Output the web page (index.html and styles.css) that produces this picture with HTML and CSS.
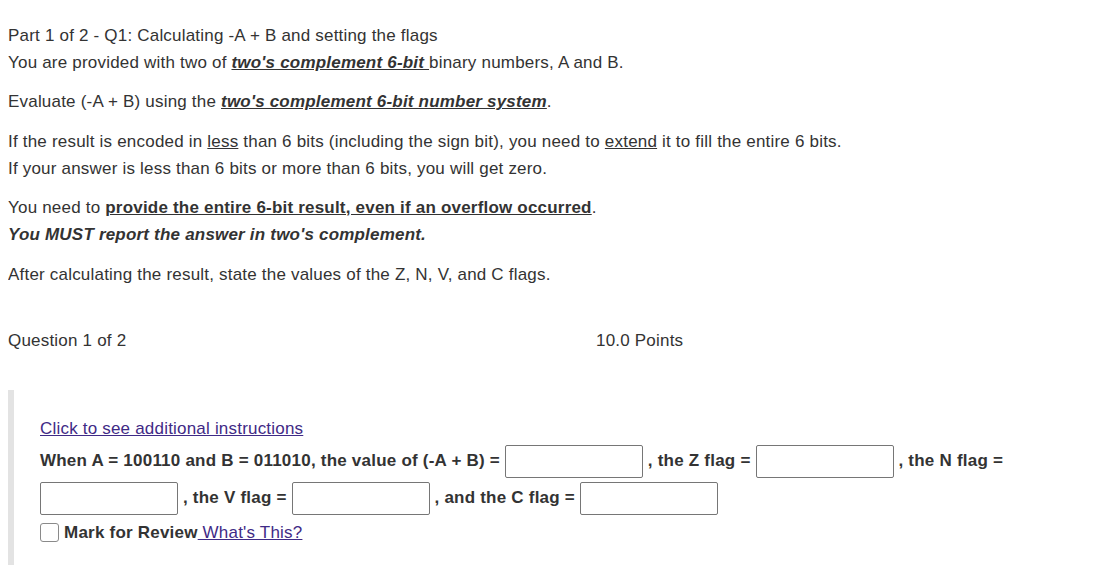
FILE: index.html
```html
<!DOCTYPE html>
<html lang="en">
<head>
    <meta charset="UTF-8">
    <meta name="viewport" content="width=device-width, initial-scale=1.0">
    <title>Part 1 of 2 - Q1</title>
    <link rel="stylesheet" href="styles.css">
</head>
<body>
    <div class="intro">
        <div class="part-title">Part 1 of 2 - Q1: Calculating -A + B and setting the flags</div>
        <div>You are provided with two of <span class="key">two's complement 6-bit </span>binary numbers, A and B.</div>

        <p>Evaluate (-A + B) using the <span class="key">two's complement 6-bit number system</span>.</p>

        <p>If the result is encoded in <u>less</u> than 6 bits (including the sign bit), you need to <u>extend</u> it to fill the entire 6 bits.<br>
        If your answer is less than 6 bits or more than 6 bits, you will get zero.</p>

        <p>You need to <span class="strong-u">provide the entire 6-bit result, even if an overflow occurred</span>.<br>
        <b><i>You MUST report the answer in two's complement.</i></b></p>

        <p>After calculating the result, state the values of the Z, N, V, and C flags.</p>
    </div>

    <div class="question-header">
        <span>Question 1 of 2</span>
        <span>10.0 Points</span>
    </div>

    <!-- question body with the grey bar on the left -->
    <div class="question-box">
        <a href="#" class="instructions">Click to see additional instructions</a>
        <div class="question-text">
            When A = 100110 and B = 011010, the value of (-A + B) = <input type="text" class="answer"> , the Z flag = <input type="text" class="answer"> , the N flag = <input type="text" class="answer"> , the V flag = <input type="text" class="answer"> , and the C flag = <input type="text" class="answer">
        </div>
        <div class="review">
            <input type="checkbox" id="markReview" class="review-box">
            <label for="markReview">Mark for Review</label><a href="#" class="whats-this"> What's This?</a>
        </div>
    </div>
</body>
</html>
```

FILE: styles.css
```css
body {
    margin: 8px;
    font-family: "Liberation Sans", Arial, sans-serif;
    font-size: 17px;
    letter-spacing: 0.2px;
    color: #333;
    background: #fff;
}
.intro {
    padding-top: 13.5px;
    line-height: 27px;
}
.intro p {
    margin: 12.5px 0 0 0;
}
.key {
    font-weight: bold;
    font-style: italic;
    text-decoration: underline;
}
.strong-u {
    font-weight: bold;
    text-decoration: underline;
}
.question-header {
    display: grid;
    grid-template-columns: 588px auto;
    margin-top: 39px;
    line-height: 27px;
}
.question-box {
    margin-top: 36.5px;
    border-left: 6px solid #e3e3e3;
    padding: 24.5px 26px 30px;
}
.instructions {
    display: block;
    line-height: 27px;
    color: #3f2a86;
}
.question-text {
    font-weight: bold;
    letter-spacing: 0.22px;
    line-height: 37px;
}
.answer {
    box-sizing: border-box;
    width: 138px;
    height: 33px;
    margin: 0;
    padding: 0 6px;
    border: 1px solid #767676;
    border-radius: 2px;
    vertical-align: middle;
    font: inherit;
}
.review {
    display: flex;
    align-items: center;
    margin-top: 3px;
    line-height: 27px;
}
.review-box {
    appearance: none;
    width: 19px;
    height: 19px;
    margin: 0 5px 0 0;
    border: 1px solid #8a8a8a;
    border-radius: 3px;
    background: #fff;
}
.review label {
    font-weight: bold;
    letter-spacing: 0.22px;
}
.whats-this {
    color: #3f2a86;
    white-space: pre;
}
```
